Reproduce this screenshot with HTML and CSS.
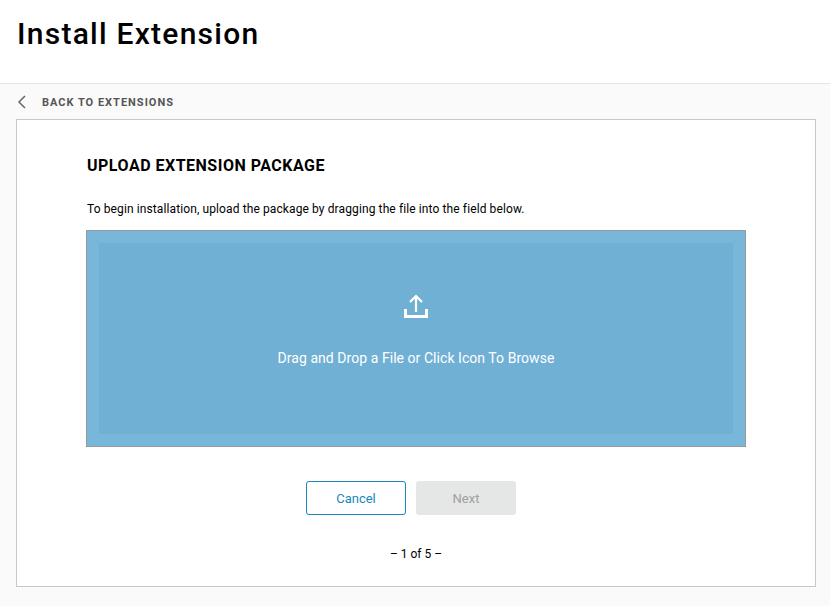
FILE: index.html
```html
<!DOCTYPE html>
<html lang="en">
<head>
    <meta charset="UTF-8">
    <title>Install Extension</title>
    <link rel="stylesheet" href="styles.css">
</head>
<body>
    <header class="page-header">
        <h1>Install Extension</h1>
    </header>
    <a class="back-link" href="#">
        <svg class="back-icon" width="9" height="14" viewBox="0 0 9 14"><path d="M8 1 2 7l6 6" fill="none" stroke="#666" stroke-width="1.5"/></svg>
        <span>BACK TO EXTENSIONS</span>
    </a>
    <main class="card">
        <h2>UPLOAD EXTENSION PACKAGE</h2>
        <p class="intro">To begin installation, upload the package by dragging the file into the field below.</p>
        <div class="dropzone">
            <div class="dropzone-inner">
                <svg class="upload-icon" width="24" height="24" viewBox="0 0 24 24"><path d="M12 18V2M6 8l6-6 6 6" fill="none" stroke="#fff" stroke-width="2.200"/><path d="M0 15v9h24v-9h-3v6H3v-6z" fill="#fff"/></svg>
                <span>Drag and Drop a File or Click Icon To Browse</span>
            </div>
        </div>
        <div class="actions">
            <button type="button" class="btn btn-cancel">Cancel</button>
            <button type="button" class="btn btn-next" disabled>Next</button>
        </div>
        <p class="steps">– 1 of 5 –</p>
    </main>
</body>
</html>
```

FILE: styles.css
```css
body {
    font-family: Roboto, "Liberation Sans", sans-serif;
    margin: 0;
    background-color: #fafafa;
    color: #000;
}
.page-header {
    height: 83px;
    background-color: #fff;
    border-bottom: 1px solid #e6e6e6;
}
h1 {
    margin: 0;
    padding: 15px 0 0 17px;
    font-size: 30px;
    line-height: 38px;
    font-weight: 500;
    letter-spacing: 1.25px;
}
.back-link {
    display: flex;
    align-items: center;
    box-sizing: border-box;
    height: 35px;
    padding: 1px 0 0 17px;
    color: #555;
    font-size: 11px;
    font-weight: 700;
    letter-spacing: 1px;
    text-decoration: none;
}
.back-icon {
    margin-right: 16px;
}
.card {
    width: 660px;
    height: 466px;
    margin-left: 16px;
    padding: 0 69px;
    background-color: #fff;
    border: 1px solid #c8c8c8;
}
h2 {
    margin: 0;
    padding: 37px 0 0 1px;
    font-size: 16px;
    line-height: 18px;
    font-weight: 700;
    letter-spacing: 0.5px;
}
.intro {
    margin: 0;
    padding: 26px 0 0 1px;
    font-size: 12px;
    line-height: 16px;
    letter-spacing: 0.11px;
}
.dropzone {
    margin-top: 13px;
    padding: 12px;
    height: 191px;
    background-color: #78b6da;
    border: 1px solid #999;
}
.dropzone-inner {
    display: flex;
    flex-direction: column;
    align-items: center;
    height: 100%;
    padding-top: 51px;
    box-sizing: border-box;
    background-color: #70b0d5;
    color: #fff;
    font-size: 14px;
    letter-spacing: 0.05px;
}
.upload-icon {
    margin-bottom: 32px;
}
.actions {
    display: flex;
    justify-content: center;
    gap: 10px;
    margin-top: 34px;
    padding-right: 10px;
}
.btn {
    width: 100px;
    height: 34px;
    font-family: inherit;
    font-size: 13px;
    border-radius: 3px;
}
.btn-cancel {
    background-color: #fff;
    color: #1b87bd;
    border: 1px solid #1b87bd;
}
.btn-next {
    background-color: #e5e6e6;
    color: #a0a0a0;
    border: none;
}
.steps {
    margin: 0;
    padding-top: 31px;
    text-align: center;
    font-size: 12px;
    line-height: 16px;
}
```
